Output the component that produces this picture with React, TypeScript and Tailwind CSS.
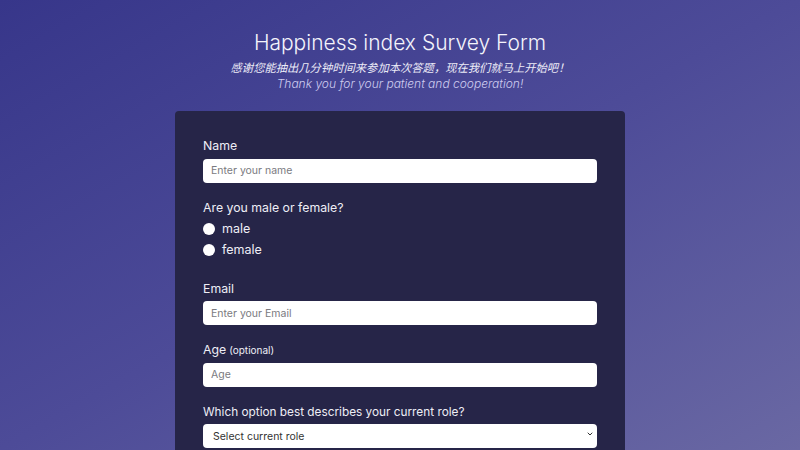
import { ChevronDown } from 'lucide-react';

const font = { fontFamily: 'Inter, "Noto Sans CJK SC", sans-serif' };

function Field({ label, extra, placeholder }: { label: string; extra?: string; placeholder: string }) {
  return (
    <div className="mb-4">
      <label className="block text-[12.3px] leading-[18px] text-[#eeeef6] mb-[1px]">
        {label}
        {extra && <span className="text-[10px] ml-[3px]">{extra}</span>}
      </label>
      <input
        placeholder={placeholder}
        className="w-full h-6 rounded bg-white px-2 text-[10.5px] text-gray-700 placeholder:text-[#7a7a80] outline-none"
      />
    </div>
  );
}

export default function App() {
  return (
    <div
      className="w-[800px] h-[450px] overflow-hidden bg-gradient-to-br from-[#37368a] via-[#4d4b98] to-[#6a68a3]"
      style={font}
    >
      <header className="text-center pt-[30px]">
        <h1 className="text-[21px] leading-[26px] font-light text-[#f4f4fb]">Happiness index Survey Form</h1>
        <p className="italic text-[11.3px] leading-[16px] mt-[4px] text-[#ecebf7]">
          感谢您能抽出几分钟时间来参加本次答题，现在我们就马上开始吧！
        </p>
        <p className="italic font-light text-[12px] leading-[16px] text-[#cfcdf0]">
          Thank you for your patient and cooperation!
        </p>
      </header>

      <form className="mx-auto mt-[19px] w-[450px] rounded-sm bg-[#262548] px-7 pt-[26px] pb-8">
        <Field label="Name" placeholder="Enter your name" />

        <div className="mb-[19px]">
          <p className="text-[12.3px] leading-[18px] text-[#eeeef6] mb-[2px]">Are you male or female?</p>
          {['male', 'female'].map((g) => (
            <label key={g} className="flex items-center gap-[7px] h-[21px] text-[12.5px] text-[#eeeef6]">
              <span className="w-3 h-3 rounded-full bg-white inline-block" />
              {g}
            </label>
          ))}
        </div>

        <Field label="Email" placeholder="Enter your Email" />
        <Field label="Age" extra="(optional)" placeholder="Age" />

        <div className="mb-4">
          <p className="text-[11.8px] leading-[18px] text-[#eeeef6] mb-[1px]">Which option best describes your current role?</p>
          <div className="relative">
            <select className="w-full h-6 appearance-none rounded bg-white pl-[10px] text-[10.5px] text-[#333] outline-none">
              <option>Select current role</option>
            </select>
            <ChevronDown className="absolute right-[3px] top-[8px] w-2 h-2 text-[#333]" strokeWidth={3} />
          </div>
        </div>
      </form>
    </div>
  );
}
